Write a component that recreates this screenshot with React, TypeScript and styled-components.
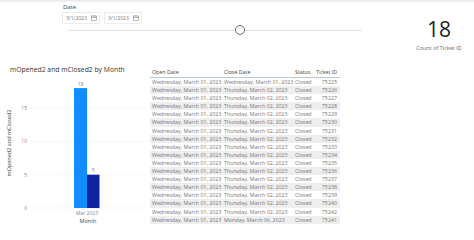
import React from "react";
import styled, { createGlobalStyle } from "styled-components";

const Global = createGlobalStyle`
  html, body { margin: 0; padding: 0; background: #fff; }
  body { font-family: "Open Sans", "Noto Sans", sans-serif; }
`;

const Page = styled.div`
  position: relative;
  width: 474px;
  height: 240px;
  overflow: hidden;
  background: #fff;
  box-shadow: inset 0 3px 3px -2px rgba(0, 0, 0, 0.12);
`;

const Header = styled.div`
  display: flex;
  height: 62px;
  padding-left: 62px;
`;

const Slicer = styled.div`
  display: flex;
  flex-direction: column;
  width: 302px;
  padding-top: 3px;
`;

const SlicerLabel = styled.div`
  font-size: 6px;
  line-height: 8px;
  color: #444;
  margin-left: 1px;
`;

const InputRow = styled.div`
  display: flex;
  gap: 4px;
  margin-top: 1px;
`;

const DateBox = styled.div`
  display: flex;
  align-items: center;
  justify-content: space-between;
  width: 38px;
  height: 12px;
  box-sizing: border-box;
  border: 1px solid #ececec;
  padding: 0 2px 0 3px;
  font-size: 5px;
  color: #777;
`;

const SliderTrack = styled.div`
  position: relative;
  margin: 6px 0 0 6px;
  width: 294px;
  height: 1px;
  background: #e3e3e3;
`;

const Thumb = styled.div`
  position: absolute;
  left: 167px;
  top: -5px;
  width: 8px;
  height: 8px;
  border: 1.3px solid #6a6a6a;
  border-radius: 50%;
  background: #fff;
`;

const Card = styled.div`
  margin-left: auto;
  margin-right: 3px;
  width: 64px;
  display: flex;
  flex-direction: column;
  align-items: center;
  padding-top: 17px;
`;

const CardValue = styled.div`
  font-size: 21px;
  line-height: 24px;
  color: #252423;
`;

const CardLabel = styled.div`
  font-size: 5.5px;
  line-height: 8px;
  color: #666;
  margin-top: 3px;
`;

const Body = styled.div`
  display: flex;
`;

const ChartPanel = styled.div`
  width: 148px;
  display: flex;
  flex-direction: column;
`;

const ChartTitle = styled.div`
  font-size: 6.8px;
  line-height: 10px;
  color: #333;
  padding: 3px 0 0 10px;
`;

const TablePanel = styled.div`
  width: 190px;
  margin-left: 2px;
  padding-top: 5px;
`;

const Grid = styled.div`
  display: grid;
  grid-template-columns: 72px 71px 23px 24px;
  font-size: 5.3px;
  color: #767676;
`;

const HeadCell = styled.div<{ $right?: boolean }>`
  height: 10px;
  line-height: 10px;
  color: #444;
  padding: 0 ${(p) => (p.$right ? "3px" : "0")} 0 ${(p) => (p.$right ? "0" : "2px")};
  text-align: ${(p) => (p.$right ? "right" : "left")};
  border-bottom: 1px solid #b9c6d3;
  white-space: nowrap;
`;

const Cell = styled.div<{ $alt: boolean; $right?: boolean }>`
  height: 8.1px;
  line-height: 8.1px;
  background: ${(p) => (p.$alt ? "#eeeeee" : "#ffffff")};
  padding: 0 ${(p) => (p.$right ? "3px" : "0")} 0 ${(p) => (p.$right ? "0" : "2px")};
  text-align: ${(p) => (p.$right ? "right" : "left")};
  white-space: nowrap;
  overflow: hidden;
`;

const CalIcon = () => (
  <svg width="6" height="6" viewBox="0 0 12 12" fill="none" stroke="#888" strokeWidth="1.2">
    <rect x="1" y="2" width="10" height="9" />
    <line x1="1" y1="5" x2="11" y2="5" />
    <line x1="4" y1="0.5" x2="4" y2="3" />
    <line x1="8" y1="0.5" x2="8" y2="3" />
  </svg>
);

const ids = [
  75225, 75226, 75227, 75228, 75229, 75230, 75231, 75232, 75233, 75234, 75235,
  75236, 75237, 75238, 75239, 75240, 75242, 75241,
];

const rows = ids.map((id, i) => ({
  open: "Wednesday, March 01, 2023",
  close:
    i === 0
      ? "Wednesday, March 01, 2023"
      : i === ids.length - 1
      ? "Monday, March 06, 2023"
      : "Thursday, March 02, 2023",
  status: "Closed",
  id,
}));

const yOf = (v: number) => 133 - (v / 5) * 33.3;

const Chart = () => (
  <svg width="148" height="160" viewBox="0 0 148 160">
    {[0, 5, 10, 15].map((v) => (
      <g key={v}>
        <line x1="30" x2="146" y1={yOf(v)} y2={yOf(v)} stroke="#f1f1f1" strokeWidth="0.6" />
        <text x="27" y={yOf(v) + 1.8} fontSize="5" fill="#888" textAnchor="end" fontFamily="Open Sans, sans-serif">
          {v}
        </text>
      </g>
    ))}
    <rect x="74" y={yOf(18)} width="13" height={yOf(0) - yOf(18)} fill="#118DFF" />
    <rect x="87" y={yOf(5)} width="12.5" height={yOf(0) - yOf(5)} fill="#12239E" />
    <text x="80.5" y={yOf(18) - 2.5} fontSize="5" fill="#888" textAnchor="middle" fontFamily="Open Sans, sans-serif">
      18
    </text>
    <text x="93.3" y={yOf(5) - 2.5} fontSize="5" fill="#888" textAnchor="middle" fontFamily="Open Sans, sans-serif">
      5
    </text>
    <text x="87" y="140" fontSize="5" fill="#888" textAnchor="middle" fontFamily="Open Sans, sans-serif">
      Mar 2023
    </text>
    <text x="88" y="147.5" fontSize="5.5" fill="#444" textAnchor="middle" fontFamily="Open Sans, sans-serif">
      Month
    </text>
    <text
      transform="translate(11 68) rotate(-90)"
      fontSize="5.5"
      fill="#444"
      textAnchor="middle"
      fontFamily="Open Sans, sans-serif"
    >
      mOpened2 and mClosed2
    </text>
  </svg>
);

export default function App() {
  return (
    <Page>
      <Global />
      <Header>
        <Slicer>
          <SlicerLabel>Date</SlicerLabel>
          <InputRow>
            <DateBox>
              <span>3/1/2023</span>
              <CalIcon />
            </DateBox>
            <DateBox>
              <span>3/1/2023</span>
              <CalIcon />
            </DateBox>
          </InputRow>
          <SliderTrack>
            <Thumb />
          </SliderTrack>
        </Slicer>
        <Card>
          <CardValue>18</CardValue>
          <CardLabel>Count of Ticket ID</CardLabel>
        </Card>
      </Header>
      <Body>
        <ChartPanel>
          <ChartTitle>mOpened2 and mClosed2 by Month</ChartTitle>
          <Chart />
        </ChartPanel>
        <TablePanel>
          <Grid>
            <HeadCell>Open Date</HeadCell>
            <HeadCell>Close Date</HeadCell>
            <HeadCell>Status</HeadCell>
            <HeadCell $right>Ticket ID</HeadCell>
            {rows.map((r, i) => (
              <React.Fragment key={i}>
                <Cell $alt={i % 2 === 1}>{r.open}</Cell>
                <Cell $alt={i % 2 === 1}>{r.close}</Cell>
                <Cell $alt={i % 2 === 1}>{r.status}</Cell>
                <Cell $alt={i % 2 === 1} $right>
                  {r.id}
                </Cell>
              </React.Fragment>
            ))}
          </Grid>
        </TablePanel>
      </Body>
    </Page>
  );
}
